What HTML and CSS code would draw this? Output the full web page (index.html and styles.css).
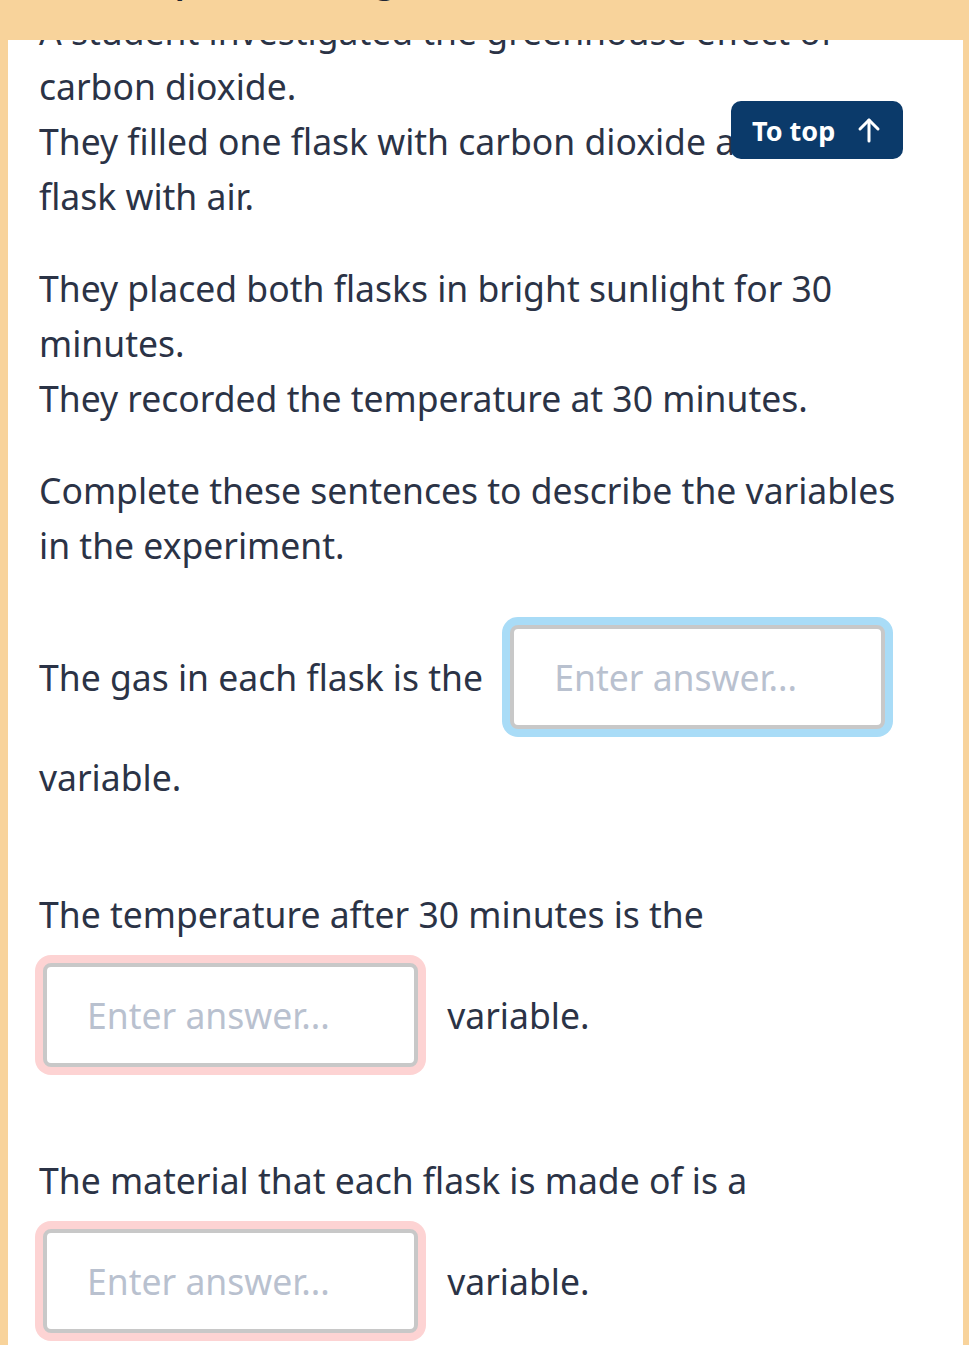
FILE: index.html
```html
<!DOCTYPE html>
<html lang="en">
<head>
  <meta charset="UTF-8">
  <meta name="viewport" content="width=device-width, initial-scale=1.0">
  <title>Greenhouse effect practical</title>
  <link rel="stylesheet" href="styles.css">
</head>
<body>
  <header class="topbar">
    <h1 class="topbar-title">Temperature in a greenhouse</h1>
  </header>

  <main class="card">
    <div class="card-body">
      <p>A student investigated the greenhouse effect of carbon dioxide.<br>
        They filled one flask with carbon dioxide and one flask with air.</p>
      <p>They placed both flasks in bright sunlight for 30 minutes.<br>
        They recorded the temperature at 30 minutes.</p>
      <p class="lead">Complete these sentences to describe the variables in the experiment.</p>

      <p class="question">The gas in each flask is the <input class="blank blank-first" type="text" placeholder="Enter answer..."> variable.</p>
      <p class="question question-short">The temperature after 30 minutes is the <input class="blank wrong" type="text" placeholder="Enter answer..."> variable.</p>
      <p class="question question-short">The material that each flask is made of is a <input class="blank wrong" type="text" placeholder="Enter answer..."> variable.</p>
    </div>
  </main>

  <a class="to-top" href="#">
    To top
    <svg width="24" height="26" viewBox="0 0 24 26" fill="none" stroke="#fff" stroke-width="3" stroke-linecap="round" stroke-linejoin="round">
      <path d="M12 24V3"/>
      <path d="M3 12l9-9 9 9"/>
    </svg>
  </a>
</body>
</html>
```

FILE: styles.css
```css
body {
  margin: 0;
  padding: 0 6px 0 8px;
  background-color: #f8d39b;
  font-family: "Noto Sans", "Open Sans", sans-serif;
  color: #2b3346;
}
.topbar {
  height: 40px;
  overflow: hidden;
}
.topbar-title {
  margin: -37px 0 0 105px;
  font-size: 30px;
  line-height: 40px;
  color: #1f2533;
}
.card {
  background-color: #fff;
  padding: 0 31px;
  height: 1305px;
  overflow: hidden;
}
.card-body {
  margin-top: -36px;
}
.card-body p {
  margin: 0 0 37px;
  font-size: 35.5px;
  line-height: 55px;
}
.card-body .lead {
  margin-bottom: 31px;
}
.card-body .question {
  margin-bottom: 82px;
}
.card-body .question-short {
  margin-bottom: 65px;
}
.blank {
  width: 375px;
  height: 104px;
  box-sizing: border-box;
  border: 4px solid #c8c8c8;
  border-radius: 8px;
  box-shadow: 0 0 0 8px #a9dcf7;
  padding: 0 40px;
  margin: 21px 20px 21px 4px;
  font-family: "Noto Sans", "Open Sans", sans-serif;
  font-size: 35.5px;
  color: #2b3346;
  outline: none;
}
.blank-first {
  margin-left: 18px;
}
.blank.wrong {
  box-shadow: 0 0 0 8px #fdd3d3;
}
.blank::placeholder {
  color: #b9c1cf;
}
.to-top {
  position: fixed;
  top: 101px;
  left: 731px;
  width: 172px;
  height: 58px;
  box-sizing: border-box;
  padding-left: 21px;
  display: flex;
  align-items: center;
  gap: 22px;
  background-color: #0b3a6a;
  border-radius: 10px;
  color: #fff;
  font-size: 27px;
  font-weight: bold;
  text-decoration: none;
}
```
